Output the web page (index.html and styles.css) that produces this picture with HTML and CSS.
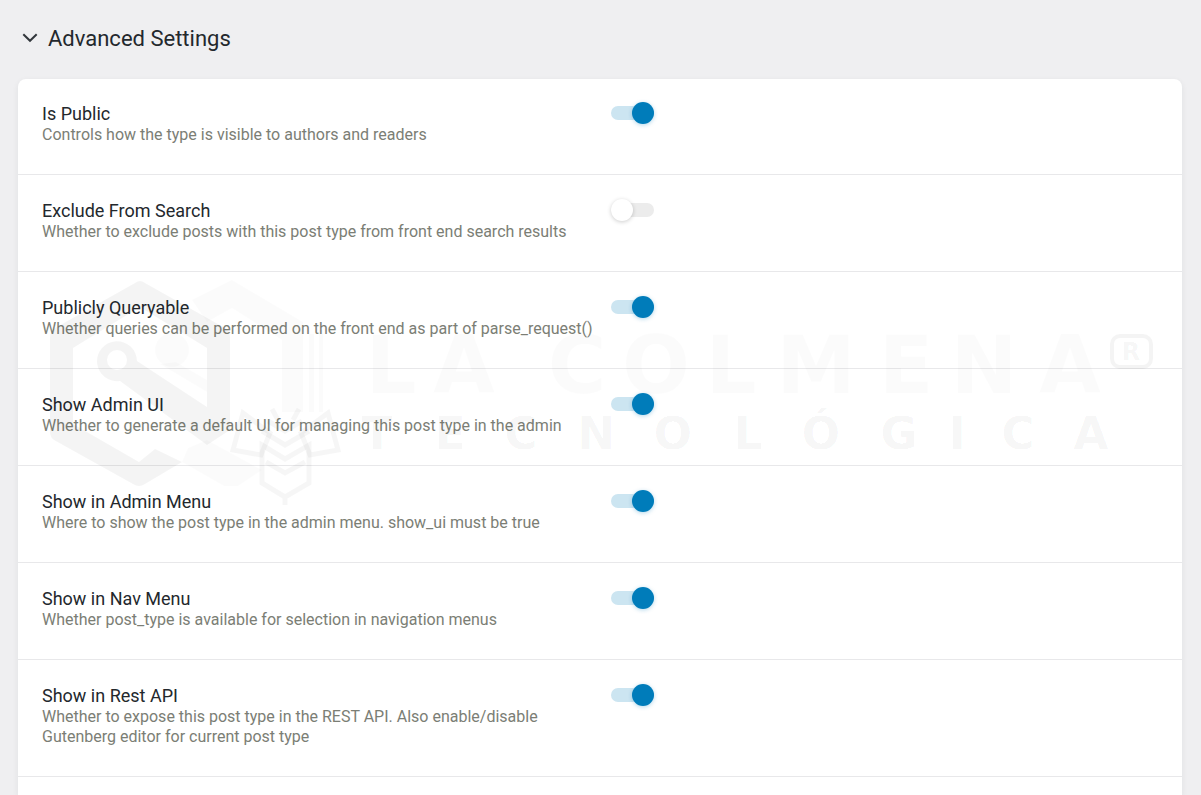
FILE: index.html
```html
<!DOCTYPE html>
<html lang="en">
<head>
<meta charset="utf-8">
<meta name="viewport" content="width=device-width, initial-scale=1">
<title>Advanced Settings</title>
<link rel="stylesheet" href="styles.css">
</head>
<body>
<div class="container">
	<h2 class="heading">
		<button type="button" class="toggle" aria-expanded="true" aria-controls="settings">
			<svg class="arrow" viewBox="0 0 16 10" aria-hidden="true"><path d="M1.300 1.200 8 7.800l6.700-6.600"/></svg>
			Advanced Settings
		</button>
	</h2>
	<div class="card" id="settings">
		<div class="row">
			<div class="info">
				<label class="name" for="public">Is Public</label>
				<p class="desc">Controls how the type is visible to authors and readers</p>
			</div>
			<input type="checkbox" class="switch" id="public" checked>
		</div>
		<div class="row">
			<div class="info">
				<label class="name" for="exclude">Exclude From Search</label>
				<p class="desc">Whether to exclude posts with this post type from front end search results</p>
			</div>
			<input type="checkbox" class="switch" id="exclude">
		</div>
		<div class="row">
			<div class="info">
				<label class="name" for="queryable">Publicly Queryable</label>
				<p class="desc">Whether queries can be performed on the front end as part of parse_request()</p>
			</div>
			<input type="checkbox" class="switch" id="queryable" checked>
		</div>
		<div class="row">
			<div class="info">
				<label class="name" for="adminui">Show Admin UI</label>
				<p class="desc">Whether to generate a default UI for managing this post type in the admin</p>
			</div>
			<input type="checkbox" class="switch" id="adminui" checked>
		</div>
		<div class="row">
			<div class="info">
				<label class="name" for="adminmenu">Show in Admin Menu</label>
				<p class="desc">Where to show the post type in the admin menu. show_ui must be true</p>
			</div>
			<input type="checkbox" class="switch" id="adminmenu" checked>
		</div>
		<div class="row">
			<div class="info">
				<label class="name" for="navmenu">Show in Nav Menu</label>
				<p class="desc">Whether post_type is available for selection in navigation menus</p>
			</div>
			<input type="checkbox" class="switch" id="navmenu" checked>
		</div>
		<div class="row">
			<div class="info">
				<label class="name" for="restapi">Show in Rest API</label>
				<p class="desc">Whether to expose this post type in the REST API. Also enable/disable Gutenberg editor for current post type</p>
			</div>
			<input type="checkbox" class="switch" id="restapi" checked>
		</div>

		<!-- watermark -->
		<svg class="watermark" viewBox="48 280 1106 230">
			<!-- back hexagon -->
			<g class="pale">
				<path d="M192 300 232 280 303 322V412H282V340L232 308 207 322ZM309 334h5v78h-5ZM319 330h4v82h-4Z"/>
				<path d="M188 448 207 440 262 470 238 486H224L182 462Z"/>
				<circle cx="172" cy="350" r="17"/>
				<path d="M176 362 207 380V392L160 364Z"/>
			</g>
			<!-- front hexagon -->
			<g class="dark">
				<path d="M135 283Q140 279 145 283L225 328Q230 331 230 337V430L207 445 120 381A20 20 0 1 1 137 361L207 407V348L140 307 73 348V424L139 462 155 449 182 462 145 484Q139 488 133 484L54 440Q50 437 50 432V337Q50 331 55 328ZM117 350A10 10 0 1 0 117 370A10 10 0 1 0 117 350Z" fill-rule="evenodd"/>
			</g>
			<!-- bee -->
			<g class="bee">
				<path d="M243 413 233 450 261 455 270 433ZM328 413 338 450 310 455 301 433Z"/>
				<path d="M272 409 278 420M299 409 293 420M262 431 285 445 309 431M268 421 285 431 302 421M262 445 285 459 309 445V483L285 497 262 483ZM266 462 285 473 305 462M285 497V505"/>
			</g>
			<text class="brand pale" y="393" x="391 464 524 577 656 731 816 906 984 1070">LA COLMENA</text>
			<text class="tag dark" y="449" x="377 450 521 596 673 748 821 899 957 1018 1091">TECNOLÓGICA</text>
			<rect class="mark" x="1112" y="336" width="39" height="31" rx="8"/>
			<text class="reg dark" x="1131" y="360">R</text>
		</svg>
	</div>
</div>
</body>
</html>
```

FILE: styles.css
```css
*{
	box-sizing:border-box;
	margin:0;
	padding:0;
}
body{
	background:#efeff1;
	color:#23282d;
	font-family:Roboto, "Liberation Sans", sans-serif;
}
.container{
	padding:25px 19px 0 18px;
}
.heading{
	font-size:22px;
	font-weight:400;
	line-height:28px;
	margin-bottom:26px;
}
.toggle{
	display:flex;
	align-items:center;
	gap:10px;
	padding-left:4px;
	border:0;
	background:none;
	color:inherit;
	font:inherit;
	cursor:pointer;
}
.arrow{
	width:16px;
	height:10px;
	margin-bottom:2px;
	fill:none;
	stroke:#32373c;
	stroke-width:2;
}
.card{
	position:relative;
	min-height:calc(100vh - 79px);
	background:#fff;
	border-radius:8px 8px 0 0;
	box-shadow:0 2px 6px rgba(35,40,45,.07);
}
.row{
	display:flex;
	align-items:flex-start;
	padding:24px 24px 29px;
	border-bottom:1px solid #e8e8ea;
}
.row:first-child{
	padding-top:23px;
}
.info{
	width:51%;
	padding:1px 16px 0 0;
}
.name{
	display:block;
	font-size:18px;
	line-height:22px;
}
.desc{
	color:#7b7e75;
	font-size:16px;
	line-height:20px;
}
.switch{
	appearance:none;
	width:43px;
	height:14px;
	margin-top:4px;
	display:flex;
	align-items:center;
	background:#ececec;
	border-radius:7px;
	cursor:pointer;
}
.switch:before{
	content:"";
	width:22px;
	height:22px;
	border-radius:50%;
	background:#fff;
	box-shadow:0 1px 4px rgba(0,0,0,.2);
}
.switch:checked{
	justify-content:flex-end;
	background:#cce5f1;
}
.switch:checked:before{
	background:#007cba;
	box-shadow:0 1px 4px rgba(0,124,186,.3);
}
.watermark{
	position:absolute;
	top:201px;
	left:30px;
	width:calc(100% - 58px);
	pointer-events:none;
}
.pale{
	fill:rgba(0,0,0,.016);
}
.dark{
	fill:rgba(0,0,0,.045);
}
.bee{
	fill:none;
	stroke:rgba(0,0,0,.035);
	stroke-width:5;
}
.mark{
	fill:none;
	stroke:rgba(0,0,0,.045);
	stroke-width:4;
}
.brand, .tag, .reg{
	font-family:"DejaVu Sans", sans-serif;
	text-anchor:middle;
}
.brand{
	font-size:80px;
	font-weight:bold;
}
.tag{
	font-size:45px;
	font-weight:bold;
}
.reg{
	font-size:24px;
	font-weight:bold;
}
```
